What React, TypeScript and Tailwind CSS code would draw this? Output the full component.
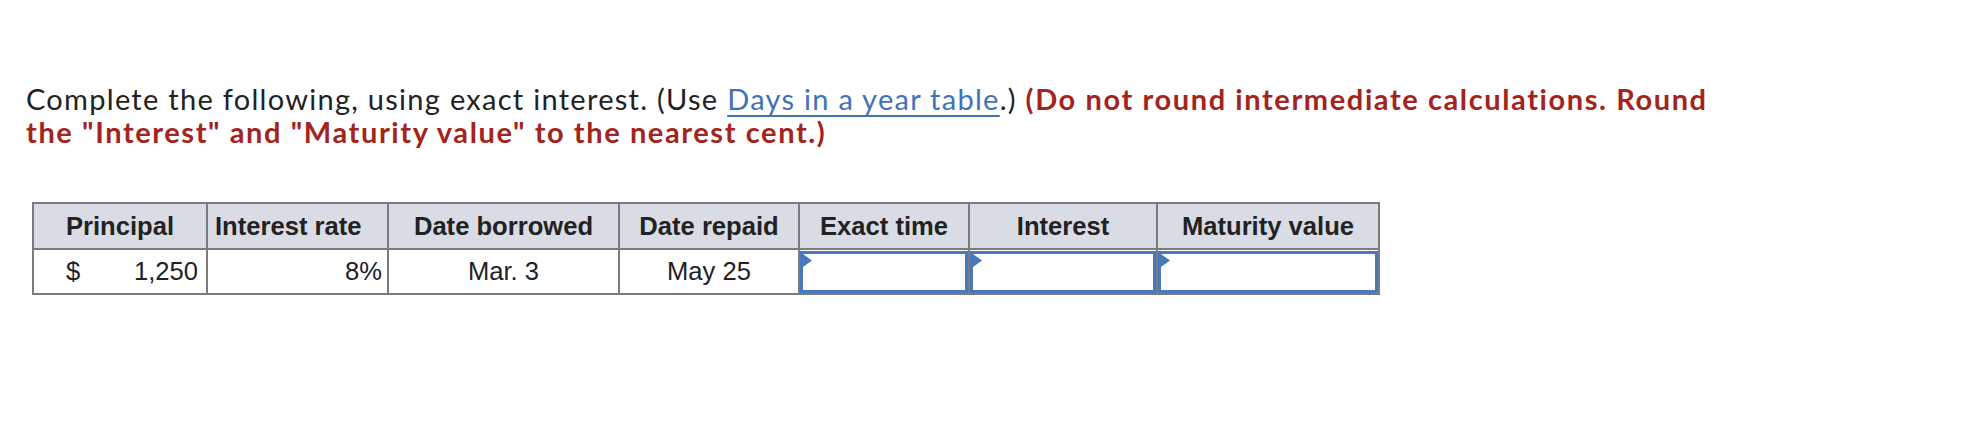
import React from 'react';

const Flag = () => (
  <svg className="absolute left-0 top-0" width="9" height="13" viewBox="0 0 9 13">
    <path d="M0 0 L9 6.5 L0 13 Z" fill="#4a78be" />
  </svg>
);

const AnswerCell: React.FC<{ width: string }> = ({ width }) => (
  <td className={`${width} border-2 border-[#7b7b7b] p-0 h-[45px]`}>
    <div className="relative h-[42px] border-[3px] border-[#4a78be] bg-white">
      <Flag />
    </div>
  </td>
);

export default function App() {
  return (
    <div className="w-[1970px] h-[434px] bg-white text-[#222]">
      <div className="pl-[26px] pt-[82px] text-[29px] leading-[33px] font-['Lato',sans-serif] tracking-[1.28px]">
        Complete the following, using exact interest. (Use{' '}
        <a href="#" className="text-[#3f72b8] underline underline-offset-[5px] decoration-[2px]">
          Days in a year table
        </a>
        .){' '}
        <span className="font-bold text-[#a3231d] tracking-[1.6px]">
          (Do not round intermediate calculations. Round
          <br />
          the "Interest" and "Maturity value" to the nearest cent.)
        </span>
      </div>

      <table className="ml-[32px] mt-[54px] border-collapse border-2 border-[#7b7b7b] font-['Liberation_Sans',Arial,sans-serif] text-[25.6px] text-[#222]">
        <thead>
          <tr className="bg-[#d9dce4] h-[46px]">
            <th className="w-[174px] border-2 border-[#7b7b7b] font-bold text-center">Principal</th>
            <th className="w-[181px] border-2 border-[#7b7b7b] font-bold text-left pl-[7px]">Interest rate</th>
            <th className="w-[231px] border-2 border-[#7b7b7b] font-bold text-center">Date borrowed</th>
            <th className="w-[180px] border-2 border-[#7b7b7b] font-bold text-center">Date repaid</th>
            <th className="w-[170px] border-2 border-[#7b7b7b] font-bold text-center">Exact time</th>
            <th className="w-[188px] border-2 border-[#7b7b7b] font-bold text-center">Interest</th>
            <th className="w-[222px] border-2 border-[#7b7b7b] font-bold text-center">Maturity value</th>
          </tr>
        </thead>
        <tbody>
          <tr className="h-[45px]">
            <td className="border-2 border-[#7b7b7b] px-[8px]">
              <div className="flex justify-between pl-[24px]">
                <span>$</span>
                <span>1,250</span>
              </div>
            </td>
            <td className="border-2 border-[#7b7b7b] text-right pr-[5px]">8%</td>
            <td className="border-2 border-[#7b7b7b] text-center">Mar. 3</td>
            <td className="border-2 border-[#7b7b7b] text-center">May 25</td>
            <AnswerCell width="w-[170px]" />
            <AnswerCell width="w-[188px]" />
            <AnswerCell width="w-[222px]" />
          </tr>
        </tbody>
      </table>
    </div>
  );
}
